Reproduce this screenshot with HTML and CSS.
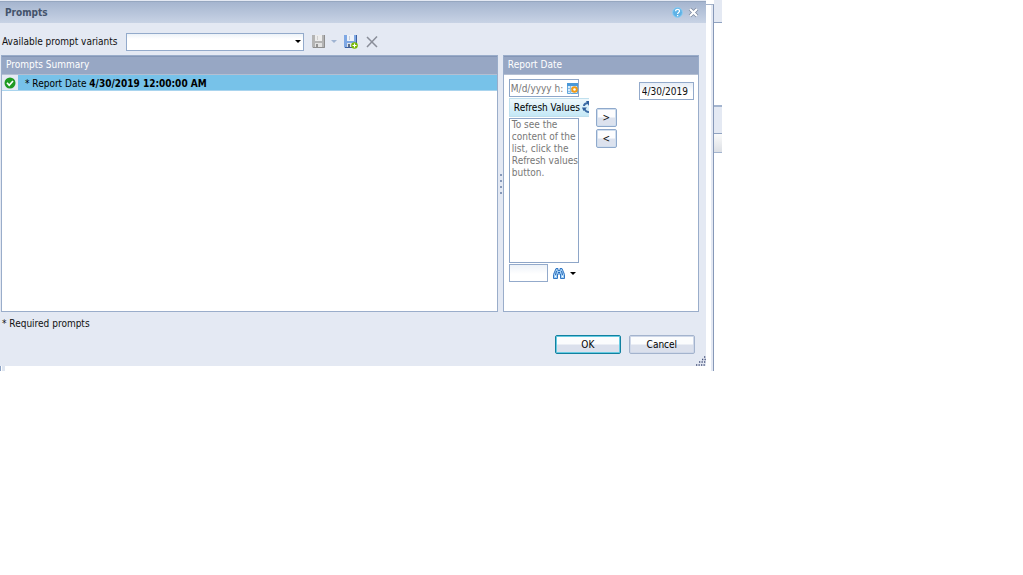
FILE: index.html
```html
<!DOCTYPE html>
<html lang="en">
<head>
    <meta charset="UTF-8">
    <meta name="viewport" content="width=device-width, initial-scale=1.0">
    <title>Prompts</title>
    <link rel="stylesheet" href="styles.css">
</head>
<body>

    <div class="stage">
        <div class="dialog-column">
            <section class="dialog" role="dialog" aria-labelledby="dialogTitle">
                <header class="titlebar">
                    <h1 id="dialogTitle">Prompts</h1>
                    <button class="icon-btn" aria-label="Help">
                        <svg width="11" height="11" viewBox="0 0 11 11">
                            <circle cx="5.5" cy="5.5" r="4.9" fill="#5eb2e6" stroke="#8fcdf2"/>
                            <path d="M3.6 4.2c0-2.6 4-2.4 3.9-.1 0 1.400-1.900 1.300-1.900 2.800M5.600 8v1.200" fill="none" stroke="#fff" stroke-width="1.300"/>
                        </svg>
                    </button>
                    <button class="icon-btn" aria-label="Close">
                        <svg width="11" height="11" viewBox="0 0 11 11">
                            <path d="M2 2l7 7M9 2l-7 7" stroke="#7a879d" stroke-width="3.600"/>
                            <path d="M2 2l7 7M9 2l-7 7" stroke="#fff" stroke-width="2.200"/>
                        </svg>
                    </button>
                </header>

                <div class="toolbar">
                    <label for="variants">Available prompt variants</label>
                    <div class="select-wrap">
                        <select id="variants"><option></option></select>
                        <i class="caret"></i>
                    </div>
                    <button class="icon-btn save" aria-label="Save variant">
                        <svg width="13" height="13" viewBox="0 0 13 13">
                            <path d="M0 0h13v13H1l-1-1z" fill="#b4b4b4"/>
                            <path d="M12.500 0v12.500H1" fill="none" stroke="#8e8e8e"/>
                            <path d="M3 0h7v6H3z" fill="#ededed"/>
                            <path d="M5.500 1v4" stroke="#cfcfcf"/>
                            <path d="M3 8h7v4H3z" fill="#e2e2e2"/>
                            <path d="M4 9h2v3H4z" fill="#939393"/>
                        </svg>
                    </button>
                    <button class="icon-btn save-menu" aria-label="Save options"><i class="caret pale"></i></button>
                    <button class="icon-btn save-as" aria-label="Save variant as">
                        <svg width="14" height="14" viewBox="0 0 14 14">
                            <path d="M0 0h13v13H1l-1-1z" fill="#7fa8e4"/>
                            <path d="M12.500 0v12.500H1" fill="none" stroke="#3c5f9f"/>
                            <path d="M3 0h7v6H3z" fill="#eef2f8"/>
                            <path d="M5.500 1v4" stroke="#c4cede"/>
                            <path d="M3 8h7v4H3z" fill="#dfe4ec"/>
                            <path d="M4 9h2v3H4z" fill="#5f6f8c"/>
                            <circle cx="10.500" cy="10.500" r="3.300" fill="#76b900"/>
                            <path d="M10.500 8.500v4M8.500 10.500h4" stroke="#fff" stroke-width="1.200"/>
                        </svg>
                    </button>
                    <button class="icon-btn" aria-label="Delete variant">
                        <svg width="12" height="12" viewBox="0 0 12 12">
                            <path d="M1 1l10 10M11 .5L1 11" stroke="#8a8e99" stroke-width="1.500"/>
                        </svg>
                    </button>
                </div>

                <div class="panels">
                    <section class="panel summary">
                        <h2>Prompts Summary</h2>
                        <div class="prompt-row">
                            <span class="status">
                                <svg width="12" height="12" viewBox="0 0 12 12">
                                    <circle cx="6" cy="6" r="5.500" fill="#1f9a22"/>
                                    <path d="M3 5.800l2.200 2.400L9 4" fill="none" stroke="#fff" stroke-width="1.700"/>
                                </svg>
                            </span>
                            <span class="prompt-text">* Report Date <b>4/30/2019 12:00:00 AM</b></span>
                        </div>
                    </section>

                    <div class="splitter"><i></i><i></i><i></i><i></i></div>

                    <section class="panel details">
                        <h2>Report Date</h2>
                        <div class="picker">
                            <div class="source">
                                <div class="date-box">
                                    <input type="text" placeholder="M/d/yyyy h:" aria-label="Date value">
                                    <button class="icon-btn" aria-label="Open calendar">
                                        <svg width="11" height="11" viewBox="0 0 11 11">
                                            <path d="M.5.5h10v10H.5z" fill="#d8ebfa" stroke="#62a7dd"/>
                                            <path d="M0 0h11v3H0z" fill="#4a98d8"/>
                                            <path d="M1 5.500h9M1 8.500h9M3.500 3v8" stroke="#8dbfe6"/>
                                            <circle cx="7.500" cy="6.500" r="2.300" fill="#fff" stroke="#f39a12" stroke-width="2"/>
                                        </svg>
                                    </button>
                                </div>
                                <button class="refresh">
                                    <span>Refresh Values</span>
                                    <svg width="12" height="13" viewBox="0 0 12 13">
                                        <path d="M2 5c0-2 2-3 5-3" fill="none" stroke="#3a6ba5" stroke-width="2"/>
                                        <path d="M4 0h6L7 5z" fill="#2f5f9c"/>
                                        <path d="M2.500 8c1 3 4 3.500 7 3" fill="none" stroke="#3a6ba5" stroke-width="1.800"/>
                                        <path d="M0 6.500h5L1.500 10z" fill="#2f5f9c"/>
                                    </svg>
                                </button>
                                <div class="value-list">To see the<br>content of the<br>list, click the<br>Refresh values<br>button.</div>
                                <div class="search">
                                    <input type="text" aria-label="Search values">
                                    <button class="icon-btn" aria-label="Find">
                                        <svg width="12" height="11" viewBox="0 0 12 11">
                                            <path d="M3 .5h2v2h2v-2h2l2.500 6v4h-4V6h-3v4.500h-4v-4z" fill="#a4d0f5" stroke="#3377c4"/>
                                            <path d="M3.500 3L2.500 7M8.500 3l1 4M5 4.500h2" stroke="#2468b8"/>
                                            <path d="M2 8.500h1M9 8.500h1" stroke="#fff"/>
                                        </svg>
                                    </button>
                                    <button class="icon-btn" aria-label="Search options"><i class="caret"></i></button>
                                </div>
                            </div>
                            <div class="movers">
                                <button aria-label="Add value">&gt;</button>
                                <button aria-label="Remove value">&lt;</button>
                            </div>
                            <input class="chosen" type="text" value="4/30/2019" aria-label="Selected value">
                        </div>
                    </section>
                </div>

                <p class="required">* Required prompts</p>
                <footer class="actions">
                    <button class="btn primary">OK</button>
                    <button class="btn">Cancel</button>
                </footer>
                <svg class="grip" width="10" height="10" viewBox="0 0 10 10" aria-hidden="true">
                    <path d="M8 1h2M6 3.500h4M3 6h7M0 9h10" stroke="#47537c" stroke-width="1.300" stroke-dasharray="1.300 1.200"/>
                </svg>
            </section>
            <div class="below"><i></i><i></i></div>
        </div>
        <div class="gutter"></div>
        <!-- page behind the dialog -->
        <div class="backdrop">
            <div class="strip head"></div>
            <div class="strip blank"></div>
            <div class="strip band"></div>
            <div class="strip bar"></div>
        </div>
    </div>

</body>
</html>
```

FILE: styles.css
```css
* {
    box-sizing: border-box;
}
body {
    margin: 0;
    background-color: #fff;
    color: #111;
    font-family: "DejaVu Sans Condensed", "DejaVu Sans", sans-serif;
    font-size: 10px;
    line-height: 12px;
}
button, input, select {
    font: inherit;
    color: inherit;
}
h1, h2, p {
    margin: 0;
}
svg {
    display: block;
}
.stage {
    display: flex;
}
.dialog-column {
    width: 69%;
}
.dialog {
    border-top: 1px solid #e4e9f3;
    background-color: #e4e9f3;
}
.icon-btn {
    display: flex;
    padding: 0;
    border: 0;
    background: none;
}
.caret {
    border: 3px solid transparent;
    border-top-color: #000;
    border-bottom: 0;
}
.caret.pale {
    border-top-color: #9fb4d2;
}

/* title bar */
.titlebar {
    display: flex;
    align-items: center;
    gap: 5px;
    height: 22px;
    padding: 0 7px 0 5px;
    border-top: 1px solid #96a7c0;
    background: linear-gradient(#a5b5cf, #c8d3e5);
}
.titlebar h1 {
    flex: 1;
    color: #44536b;
    font-size: 10px;
}

/* variants toolbar */
.toolbar {
    display: flex;
    align-items: center;
    height: 32px;
    padding: 5px 0 0 2px;
}
.toolbar label {
    width: 124px;
    white-space: nowrap;
}
.select-wrap {
    display: flex;
    align-items: center;
    justify-content: flex-end;
    width: 178px;
    height: 18px;
    padding-right: 2px;
    border: 1px solid #93aacb;
    background: linear-gradient(#edf2f8, #fff 5px);
}
.select-wrap select {
    flex: 1;
    appearance: none;
    height: 16px;
    border: 0;
    background: none;
}
.save {
    margin-left: 8px;
}
.save-menu {
    margin: 0 7px 0 6px;
}
.save-as {
    margin-right: 8px;
}

/* panels */
.panels {
    display: flex;
    height: 257px;
    padding: 0 7px 0 1px;
}
.panel {
    border: 1px solid #9aadca;
    background-color: #fff;
}
.panel h2 {
    height: 19px;
    padding: 2px 4px;
    border-top: 1px solid #8496b6;
    border-bottom: 1px solid #b4bfd2;
    background-color: #97a7c4;
    color: #fff;
    font-size: 10px;
    font-weight: normal;
}
.summary {
    flex: 1;
}
.prompt-row {
    display: flex;
    height: 16px;
    border-bottom: 1px solid #a9d4ee;
    background-color: #77c2e9;
}
.status {
    width: 16px;
    padding: 2px;
    background-color: #e4e9f3;
}
.prompt-text {
    padding: 3px 7px 0;
    color: #000;
}
.splitter {
    display: flex;
    flex-direction: column;
    align-items: flex-end;
    justify-content: center;
    gap: 4px;
    width: 5px;
    padding-right: 1px;
}
.splitter i {
    width: 2px;
    height: 2px;
    background-color: #8798b8;
}
.details {
    width: 196px;
}
.picker {
    display: flex;
    align-items: flex-start;
    padding: 4px 4px 0 5px;
}
.source {
    width: 80px;
}
.date-box {
    display: flex;
    align-items: center;
    width: 70px;
    height: 18px;
    border: 1px solid #8ea6c8;
    background-color: #fff;
}
.date-box input {
    flex: 1;
    min-width: 0;
    padding: 2px 0 0 1px;
    border: 0;
    background: none;
}
.date-box input::placeholder {
    color: #777;
    opacity: 1;
}
.refresh {
    display: flex;
    align-items: center;
    gap: 2px;
    width: 80px;
    height: 19px;
    margin-top: 1px;
    padding: 0 0 0 4px;
    overflow: hidden;
    border: 1px solid #c0e0ee;
    border-right: 0;
    background: linear-gradient(#eff8fc, #c4e8f6);
    color: #000;
    white-space: nowrap;
}
.refresh svg {
    flex: none;
}
.value-list {
    width: 70px;
    height: 145px;
    margin-top: 1px;
    padding: 0 0 0 2px;
    border: 1px solid #8ea6c8;
    color: #777;
    white-space: nowrap;
}
.search {
    display: flex;
    align-items: center;
    gap: 5px;
    margin-top: 1px;
}
.search input {
    width: 39px;
    height: 18px;
    padding: 0 2px;
    border: 1px solid #93aacb;
    background: linear-gradient(#edf2f8, #fff 9px);
}
.movers {
    display: flex;
    flex-direction: column;
    gap: 2px;
    margin: 29px 0 0 7px;
}
.movers button {
    width: 21px;
    height: 19px;
    padding: 0;
    border: 1px solid #8fa9cc;
    border-radius: 2px;
    background: linear-gradient(#fdfdfe 45%, #dce2ee 55%);
    box-shadow: inset 0 0 0 1px #d0deee;
}
.chosen {
    width: 55px;
    height: 18px;
    margin: 3px 0 0 auto;
    padding: 1px 2px 0;
    border: 1px solid #93aacb;
    background: linear-gradient(#e6edf6, #fff 9px);
}

/* footer */
.required {
    padding: 6px 2px 5px;
}
.actions {
    display: flex;
    justify-content: flex-end;
    gap: 8px;
    padding: 0 11px 0 0;
}
.btn {
    width: 66px;
    height: 19px;
    padding: 0;
    border: 1px solid #a3b3cd;
    border-radius: 2px;
    background: linear-gradient(#fbfcfd 45%, #dbe0ec 55%);
    box-shadow: inset 0 0 0 1px #cfd8e9;
    color: #000;
}
.btn.primary {
    border-color: #12809f;
    box-shadow: inset 0 0 0 1px #66cbe2;
}
.grip {
    margin: 2px 0 0 auto;
}
.below {
    display: flex;
    gap: 1px;
    height: 5px;
}
.below i {
    width: 1px;
    background-color: #8ca2c4;
}
.below i + i {
    width: 3px;
    background-color: #dfe6f1;
}

/* right edge */
.gutter {
    width: 8px;
    margin-top: 4px;
    border-top: 1px solid #a4b2c9;
    border-right: 1px solid #8698b8;
    box-shadow: inset -2px 0 #e4e9f3;
}
.backdrop {
    width: 8px;
}
.strip.head {
    height: 23px;
    border-bottom: 1px solid #8fa2c1;
    background-color: #e4e9f3;
}
.strip.blank {
    height: 82px;
}
.strip.band {
    height: 29px;
    border-top: 2px solid #a3b4cf;
    border-bottom: 1px solid #8fa2c1;
    background-color: #e4e9f3;
}
.strip.bar {
    height: 19px;
    border-bottom: 1px solid #a3b4cf;
    background: linear-gradient(#fafafa, #dcdfe5);
}
```
